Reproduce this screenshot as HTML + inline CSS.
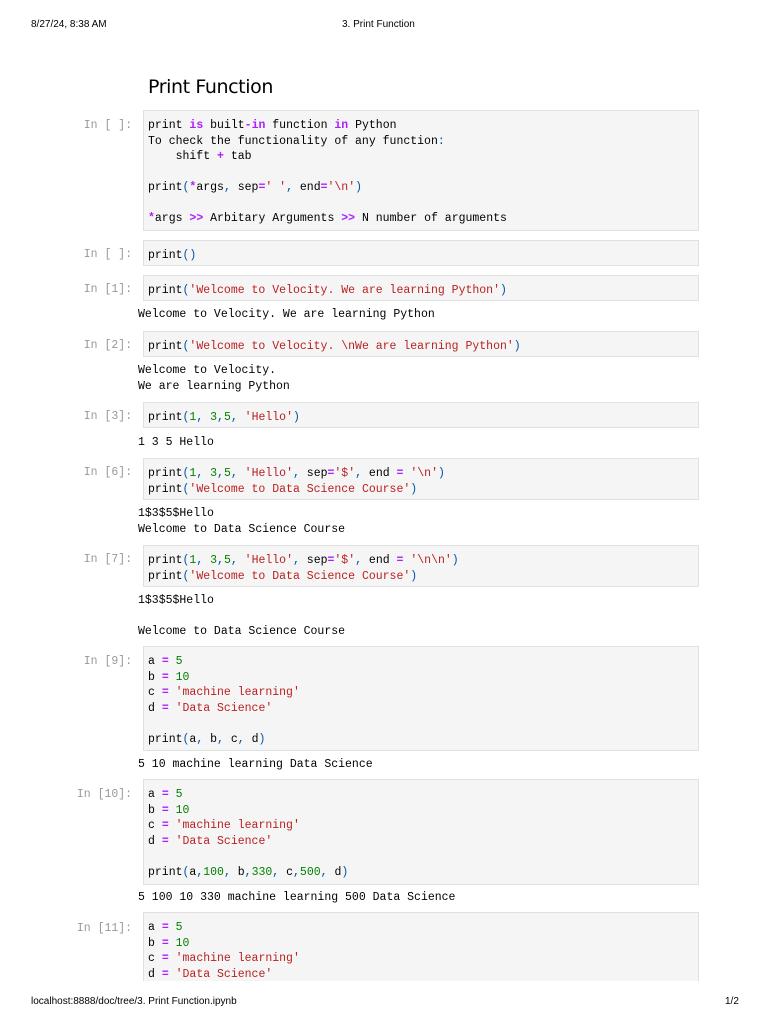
<!DOCTYPE html>
<html><head><meta charset="utf-8"><style>
body{margin:0;width:768px;height:1024px;background:#fff;position:relative;overflow:hidden;font-family:"Liberation Mono",monospace;}
.hdr{position:absolute;font-family:"Liberation Sans",sans-serif;font-size:10px;color:#000;}
.title{position:absolute;left:148px;top:76px;font-family:"DejaVu Sans","Liberation Sans",sans-serif;font-size:19px;color:#000;letter-spacing:-0.4px}
.box{position:absolute;left:143px;width:556px;background:#f5f5f5;border:1px solid #e0e0e0;box-sizing:border-box;padding:7px 0 0 4px;}
.l{height:15.5px;line-height:15.5px;font-size:11.5px;white-space:pre;color:#000}
.p{position:absolute;width:139px;left:0;text-align:right;font-size:11.5px;color:#999;line-height:15.5px;white-space:pre}
.o{position:absolute;left:138px;font-size:11.5px;line-height:15.5px;white-space:pre;color:#000}
.k{color:#a2f;font-weight:bold}.s{color:#ba2121}.n{color:#008000}.b{color:#05a}.op{color:#a2f;font-weight:bold}
</style></head><body>
<div class="hdr" style="left:31px;top:19px">8/27/24, 8:38 AM</div>
<div class="hdr" style="left:342px;top:19px">3. Print Function</div>
<div class="title">Print Function</div>

<div class="p" style="top:118px">In [ ]: </div>
<div class="box" style="top:110px;height:121px">
<div class="l">print <span class="k">is</span> built<span class="op">-</span><span class="k">in</span> function <span class="k">in</span> Python</div>
<div class="l">To check the functionality of any function<span class="b">:</span></div>
<div class="l">    shift <span class="op">+</span> tab</div>
<div class="l"> </div>
<div class="l">print<span class="b">(</span><span class="op">*</span>args<span class="b">,</span> sep<span class="op">=</span><span class="s">' '</span><span class="b">,</span> end<span class="op">=</span><span class="s">'\n'</span><span class="b">)</span></div>
<div class="l"> </div>
<div class="l"><span class="op">*</span>args <span class="op">&gt;&gt;</span> Arbitary Arguments <span class="op">&gt;&gt;</span> N number of arguments</div>
</div>

<div class="p" style="top:247px">In [ ]: </div>
<div class="box" style="top:240px;height:26px"><div class="l">print<span class="b">()</span></div></div>

<div class="p" style="top:282px">In [1]: </div>
<div class="box" style="top:275px;height:26px"><div class="l">print<span class="b">(</span><span class="s">'Welcome to Velocity. We are learning Python'</span><span class="b">)</span></div></div>
<div class="o" style="top:307px">Welcome to Velocity. We are learning Python</div>

<div class="p" style="top:338px">In [2]: </div>
<div class="box" style="top:331px;height:26px"><div class="l">print<span class="b">(</span><span class="s">'Welcome to Velocity. \nWe are learning Python'</span><span class="b">)</span></div></div>
<div class="o" style="top:363px">Welcome to Velocity.
We are learning Python</div>

<div class="p" style="top:409px">In [3]: </div>
<div class="box" style="top:402px;height:26px"><div class="l">print<span class="b">(</span><span class="n">1</span><span class="b">,</span> <span class="n">3</span><span class="b">,</span><span class="n">5</span><span class="b">,</span> <span class="s">'Hello'</span><span class="b">)</span></div></div>
<div class="o" style="top:435px">1 3 5 Hello</div>

<div class="p" style="top:465px">In [6]: </div>
<div class="box" style="top:458px;height:42px">
<div class="l">print<span class="b">(</span><span class="n">1</span><span class="b">,</span> <span class="n">3</span><span class="b">,</span><span class="n">5</span><span class="b">,</span> <span class="s">'Hello'</span><span class="b">,</span> sep<span class="op">=</span><span class="s">'$'</span><span class="b">,</span> end <span class="op">=</span> <span class="s">'\n'</span><span class="b">)</span></div>
<div class="l">print<span class="b">(</span><span class="s">'Welcome to Data Science Course'</span><span class="b">)</span></div>
</div>
<div class="o" style="top:506px">1$3$5$Hello
Welcome to Data Science Course</div>

<div class="p" style="top:552px">In [7]: </div>
<div class="box" style="top:545px;height:42px">
<div class="l">print<span class="b">(</span><span class="n">1</span><span class="b">,</span> <span class="n">3</span><span class="b">,</span><span class="n">5</span><span class="b">,</span> <span class="s">'Hello'</span><span class="b">,</span> sep<span class="op">=</span><span class="s">'$'</span><span class="b">,</span> end <span class="op">=</span> <span class="s">'\n\n'</span><span class="b">)</span></div>
<div class="l">print<span class="b">(</span><span class="s">'Welcome to Data Science Course'</span><span class="b">)</span></div>
</div>
<div class="o" style="top:593px">1$3$5$Hello

Welcome to Data Science Course</div>

<div class="p" style="top:654px">In [9]: </div>
<div class="box" style="top:646px;height:105px">
<div class="l">a <span class="op">=</span> <span class="n">5</span></div>
<div class="l">b <span class="op">=</span> <span class="n">10</span></div>
<div class="l">c <span class="op">=</span> <span class="s">'machine learning'</span></div>
<div class="l">d <span class="op">=</span> <span class="s">'Data Science'</span></div>
<div class="l"> </div>
<div class="l">print<span class="b">(</span>a<span class="b">,</span> b<span class="b">,</span> c<span class="b">,</span> d<span class="b">)</span></div>
</div>
<div class="o" style="top:757px">5 10 machine learning Data Science</div>

<div class="p" style="top:787px">In [10]: </div>
<div class="box" style="top:779px;height:106px">
<div class="l">a <span class="op">=</span> <span class="n">5</span></div>
<div class="l">b <span class="op">=</span> <span class="n">10</span></div>
<div class="l">c <span class="op">=</span> <span class="s">'machine learning'</span></div>
<div class="l">d <span class="op">=</span> <span class="s">'Data Science'</span></div>
<div class="l"> </div>
<div class="l">print<span class="b">(</span>a<span class="b">,</span><span class="n">100</span><span class="b">,</span> b<span class="b">,</span><span class="n">330</span><span class="b">,</span> c<span class="b">,</span><span class="n">500</span><span class="b">,</span> d<span class="b">)</span></div>
</div>
<div class="o" style="top:890px">5 100 10 330 machine learning 500 Data Science</div>

<div class="p" style="top:921px">In [11]: </div>
<div class="box" style="top:912px;height:69px;border-bottom:none">
<div class="l">a <span class="op">=</span> <span class="n">5</span></div>
<div class="l">b <span class="op">=</span> <span class="n">10</span></div>
<div class="l">c <span class="op">=</span> <span class="s">'machine learning'</span></div>
<div class="l">d <span class="op">=</span> <span class="s">'Data Science'</span></div>
</div>

<div class="hdr" style="left:31px;top:996px">localhost:8888/doc/tree/3. Print Function.ipynb</div>
<div class="hdr" style="left:725px;top:996px">1/2</div>
</body></html>
